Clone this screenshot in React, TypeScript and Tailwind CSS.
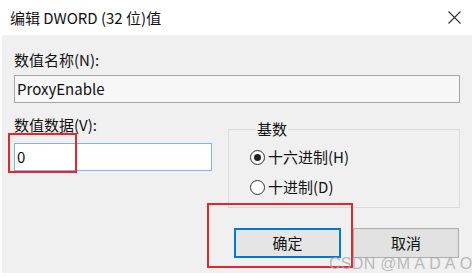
const font = "font-['Segoe_UI','Noto_Sans_CJK_SC','Noto_Sans',sans-serif]";

function Radio({ checked, label }: { checked?: boolean; label: string }) {
  return (
    <div className="flex h-[20px] items-center">
      <span className="flex h-[15px] w-[15px] items-center justify-center rounded-full border border-[#333] bg-white">
        {checked && <span className="h-[7px] w-[7px] rounded-full bg-[#222]" />}
      </span>
      <span className="ml-[3px] text-[15px] leading-[20px] text-[#111]">{label}</span>
    </div>
  );
}

export default function App() {
  return (
    <div className={`relative h-[278px] w-[474px] overflow-hidden bg-white ${font}`}>
      <div className="flex h-[35px] items-center justify-between pl-[10px] pr-[13px]">
        <span className="text-[15px] leading-[20px] text-[#111]">编辑 DWORD (32 位)值</span>
        <svg width="13" height="13" viewBox="0 0 13 13" className="text-[#333]">
          <path d="M0.5 0.5 L12.5 12.5 M12.5 0.5 L0.5 12.5" stroke="currentColor" strokeWidth="1.1" />
        </svg>
      </div>

      <div className="ml-[2px] mr-[2px] h-[238px] bg-[#f0f0f0] pl-[12px] pr-[12px] pt-[15px]">
        <div className="text-[15px] leading-[20px] text-[#111]">数值名称(N):</div>
        <div className="mt-[5px] flex h-[28px] items-center border border-[#a5a5a5] bg-[#f7f7f7] pl-[2px] text-[15px] text-[#111]">
          ProxyEnable
        </div>

        <div className="mt-[12px] flex">
          <div className="w-[198px]">
            <div className="text-[15px] leading-[20px] text-[#111]">数值数据(V):</div>
            <div className="mt-[8px] flex h-[28px] items-center border border-[#7eb4ea] bg-white pl-[2px] text-[15px] text-[#111]">
              0
            </div>
          </div>

          <div className="ml-[16px] flex-1">
            <fieldset className="mt-[4px] border border-[#dcdcdc] pb-[10px] pl-[21px]">
              <legend className="ml-[6px] px-[1px] text-[15px] leading-[20px] text-[#111]">基数</legend>
              <div className="mt-[8px] flex flex-col gap-[10px]">
                <Radio checked label="十六进制(H)" />
                <Radio label="十进制(D)" />
              </div>
            </fieldset>
          </div>
        </div>

        <div className="mt-[20px] flex justify-end gap-[12px] pr-[1px]">
          <button className="h-[30px] w-[107px] border-2 border-[#0078d7] bg-[#e5e5e5] text-[15px] text-[#111]">
            确定
          </button>
          <button className="h-[30px] w-[106px] border border-[#adadad] bg-[#e1e1e1] text-[15px] text-[#111]">
            取消
          </button>
        </div>
      </div>

      {/* annotation boxes */}
      <div className="absolute left-[8px] top-[133px] h-[40px] w-[69px] border-2 border-[#e0282e]" />
      <div className="absolute left-[207px] top-[203px] h-[65px] w-[146px] border-2 border-[#e0282e]" />

      <div className="absolute left-[329px] top-[255px] whitespace-pre font-['Liberation_Sans',sans-serif] text-[16px] leading-[18px] tracking-[0.3px] text-[#a9a9a9]/80">
        CSDN @M A D A O
      </div>
    </div>
  );
}
